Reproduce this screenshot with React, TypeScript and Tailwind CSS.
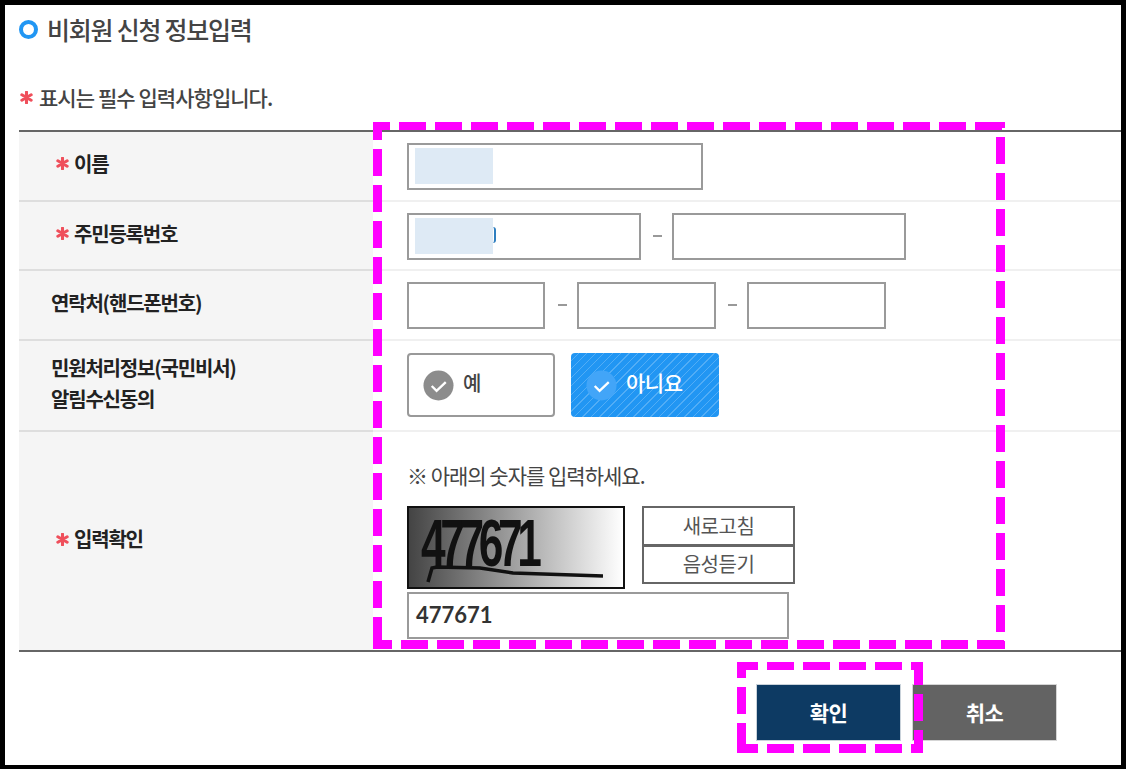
const font = { fontFamily: '"Noto Sans CJK KR", "Noto Sans", sans-serif' };

const Star = ({ className = "" }: { className?: string }) => (
  <svg viewBox="0 0 12 12" className={`w-[13px] h-[13px] shrink-0 ${className}`} stroke="#ef4f5b" strokeWidth="2.8" strokeLinecap="round">
    <path d="M6 1v10M1.7 3.5l8.6 5M1.7 8.5l8.6-5" />
  </svg>
);

const Check = ({ bg }: { bg: string }) => (
  <svg viewBox="0 0 32 32" className="w-[31px] h-[31px] shrink-0">
    <circle cx="16" cy="16" r="15.5" fill={bg} />
    <path d="M9 16.5l5 5 9.5-9" fill="none" stroke="#fff" strokeWidth="2.4" />
  </svg>
);

const Box = ({ className = "", children }: { className?: string; children?: React.ReactNode }) => (
  <div className={`h-[47px] border-2 border-[#9a9a9a] bg-white shrink-0 ${className}`}>{children}</div>
);

const Selected = () => <div className="w-[78px] h-[36px] ml-[6px] mt-[3px] bg-[#deeaf5]" />;

const Dash = () => <span className="block w-[9px] h-[2px] bg-[#999] shrink-0" />;

const Head = ({ star, children }: { star?: boolean; children: React.ReactNode }) => (
  <div className="w-[354px] shrink-0 self-stretch bg-[#f5f5f5] border-b-2 border-[#dedede] flex items-center pl-[32px] pb-[5px] text-[20px] font-bold text-[#222] tracking-[-1.2px] leading-[31px]">
    {star && <Star className="ml-[5px] mr-[5px]" />}
    <div>{children}</div>
  </div>
);

const Row = ({ head, star, h, children }: { head: React.ReactNode; star?: boolean; h: string; children: React.ReactNode }) => (
  <div className={`flex ${h}`}>
    <Head star={star}>{head}</Head>
    <div className="flex-1 border-b-2 border-[#f0f0f0] pl-[34px] flex items-center">{children}</div>
  </div>
);

// each side has its own dash phase, as in the picture
const Marquee = ({ className, w, h, t, r, b, l }: { className: string; w: number; h: number; t: number; r: number; b: number; l: number }) => (
  <svg className={`absolute ${className}`} width={w} height={h} fill="none" stroke="#ff00ff" strokeDasharray="27 9">
    <path d={`M0 4H${w}`} strokeWidth="8" strokeDashoffset={t} />
    <path d={`M${w - 4.5} 0V${h}`} strokeWidth="9" strokeDashoffset={r} />
    <path d={`M0 ${h - 4.5}H${w}`} strokeWidth="9" strokeDashoffset={b} />
    <path d={`M4.5 0V${h}`} strokeWidth="9" strokeDashoffset={l} />
  </svg>
);

export default function App() {
  return (
    <div style={font} className="relative w-[1126px] h-[769px] overflow-hidden bg-white border-t-[5px] border-l-[5px] border-r-[5px] border-b-[4px] border-black text-[#444]">
      <div className="h-[49px] pl-[14px] flex items-center">
        <span className="w-[19px] h-[19px] rounded-full border-[4px] border-[#2196f3]" />
        <h1 className="ml-[9px] text-[25px] font-medium tracking-[-1.25px]">비회원 신청 정보입력</h1>
      </div>
      <div className="h-[76px] pl-[15px] pt-[11px] flex items-center">
        <Star />
        <p className="ml-[6px] text-[21px] font-medium tracking-[-0.95px]">표시는 필수 입력사항입니다.</p>
      </div>

      <div className="ml-[14px] border-t-2 border-b-2 border-[#666]">
        <Row head="이름" star h="h-[70px]">
          <Box className="w-[296px]"><Selected /></Box>
        </Row>
        <Row head="주민등록번호" star h="h-[69px]">
          <Box className="w-[234px] mt-[2px] flex"><Selected /><span className="mt-[12px] w-[3px] h-[16px] border-r-2 border-[#2f7fc0] rounded-r-[3px]" /></Box>
          <span className="ml-[12px] mr-[10px]"><Dash /></span>
          <Box className="w-[234px] mt-[2px]" />
        </Row>
        <Row head="연락처(핸드폰번호)" h="h-[70px]">
          <Box className="w-[138px]" />
          <span className="ml-[13px] mr-[10px]"><Dash /></span>
          <Box className="w-[139px]" />
          <span className="ml-[12px] mr-[10px]"><Dash /></span>
          <Box className="w-[139px]" />
        </Row>
        <Row head={<>민원처리정보(국민비서)<br />알림수신동의</>} h="h-[91px]">
          <div className="w-[148px] h-[64px] -mt-[1px] rounded-[4px] border-2 border-[#999] flex items-center pl-[14px] gap-[9px] text-[20px] font-medium">
            <Check bg="#8c8c8c" />
            <span className="-mt-[4px]">예</span>
          </div>
          <div className="ml-[16px] -mt-[1px] w-[148px] h-[64px] rounded-[4px] bg-[#2196f3] bg-[repeating-linear-gradient(135deg,transparent_0,transparent_5px,rgba(255,255,255,0.22)_5px,rgba(255,255,255,0.22)_6px)] flex items-center pl-[15px] gap-[9px] text-[21px] font-medium text-white tracking-[-0.5px]">
            <Check bg="#42a5f8" />
            <span className="-mt-[5px]">아니요</span>
          </div>
        </Row>
        <div className="flex h-[218px]">
          <div className="w-[354px] shrink-0 bg-[#f5f5f5] flex items-center pl-[32px] pb-[4px] text-[20px] font-bold text-[#222] tracking-[-1.2px]">
            <Star className="ml-[5px] mr-[5px]" />
            입력확인
          </div>
          <div className="flex-1 pl-[34px] pt-[29px]">
            <p className="h-[28px] leading-[28px] text-[21px] tracking-[-1px]">※ 아래의 숫자를 입력하세요.</p>
            <div className="mt-[17px] flex">
              <div className="relative w-[218px] h-[83px] border-2 border-[#111] bg-[linear-gradient(90deg,#444_0%,#fff_100%)] overflow-hidden">
                <span className="absolute left-[12px] top-[3px] origin-left scale-x-[0.67] text-[66px] leading-[64px] font-bold text-[#111] tracking-[-8px] [font-family:'Liberation_Sans',sans-serif]">477671</span>
                <svg className="absolute inset-0" width="214" height="79" fill="none" stroke="#111" strokeWidth="3.5">
                  <path d="M19 74l4-14 5-1 43 1 33 5 90 3" />
                </svg>
              </div>
              <div className="ml-[17px] w-[153px] text-[20px] tracking-[-0.5px] text-center text-[#555]">
                <div className="h-[40px] border-2 border-[#666] leading-[35px]">새로고침</div>
                <div className="h-[39px] -mt-[1px] border-2 border-[#666] leading-[33px]">음성듣기</div>
              </div>
            </div>
            <div className="mt-[3px] w-[382px] h-[47px] border-2 border-[#9a9a9a] pl-[7px] pb-[3px] flex items-center text-[22px] font-bold text-[#333] [font-family:Lato,sans-serif]">477671</div>
          </div>
        </div>
      </div>

      <div className="flex justify-end pr-[64px] pt-[32px] gap-[11px] text-[21px] font-bold text-white">
        <button className="w-[145px] h-[57px] bg-[#0d3a63] border border-[#c9d2da] tracking-[-0.5px]">확인</button>
        <button className="w-[145px] h-[57px] bg-[#636363] border border-[#d5d5d5] tracking-[-0.5px]">취소</button>
      </div>

      <Marquee className="left-[368px] top-[117px]" w={632} h={527} t={10} r={21} b={8} l={9} />
      <Marquee className="left-[732px] top-[657px]" w={186} h={91} t={6} r={4} b={6} l={11} />
    </div>
  );
}
